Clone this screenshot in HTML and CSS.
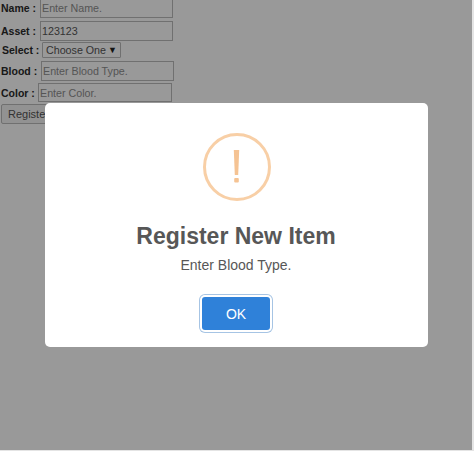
FILE: index.html
```html
<!DOCTYPE html>
<html lang="en">
<head>
    <meta charset="UTF-8">
    <meta name="viewport" content="width=device-width, initial-scale=1.0">
    <title>Register New Item</title>
    <link rel="stylesheet" href="styles.css">
</head>
<body>
    <form class="item-form">
        <div class="row row-name">
            <label class="label">Name :</label>
            <input class="field" type="text" placeholder="Enter Name.">
        </div>
        <div class="row row-asset">
            <label class="label">Asset :</label>
            <input class="field" type="text" value="123123">
        </div>
        <div class="row row-select">
            <label class="label">Select :</label>
            <div class="picker">Choose One <span class="picker-arrow">▼</span></div>
        </div>
        <div class="row row-blood">
            <label class="label">Blood :</label>
            <input class="field" type="text" placeholder="Enter Blood Type.">
        </div>
        <div class="row row-color">
            <label class="label">Color :</label>
            <input class="field" type="text" placeholder="Enter Color.">
        </div>
        <button class="register" type="button">Register</button>
    </form>

    <!-- Alert dialog over the form -->
    <div class="overlay">
        <div class="modal">
            <svg class="warning-icon" width="68" height="68" viewBox="0 0 68 68">
                <circle cx="34" cy="34" r="32.5" fill="none" stroke="#f8cfa6" stroke-width="3"/>
                <path d="M30.8 17h5.4l-1 25h-3.4z" fill="#f5c393"/>
                <rect x="31.2" y="45" width="4.6" height="4.5" rx="1" fill="#f5c393"/>
            </svg>
            <h2 class="title">Register New Item</h2>
            <p class="message">Enter Blood Type.</p>
            <button class="ok" type="button">OK</button>
        </div>
    </div>
</body>
</html>
```

FILE: styles.css
```css
html {
    background-color: #e4e4e4;
}
body {
    font-family: "Liberation Sans", Arial, sans-serif;
    margin: 0;
    background-color: #fff;
    width: 472px;
    height: 450px;
    overflow: hidden;
}
.item-form {
    padding-top: 1px;
    margin-top: -4px;
    font-size: 10.5px;
    color: #2b2b2b;
}
.row {
    display: flex;
    align-items: center;
}
.row-name {
    height: 21px;
    margin-bottom: 3px;
}
.row-asset {
    height: 20px;
    margin-bottom: 1px;
}
.row-select {
    height: 16px;
    margin-bottom: 3px;
}
.row-blood {
    height: 20px;
    margin-bottom: 2px;
}
.row-color {
    height: 19px;
    margin-bottom: 2px;
}
.label {
    font-weight: bold;
    white-space: nowrap;
    padding-left: 1px;
}
.row-name .label, .row-asset .label {
    width: 39px;
}
.row-select .label {
    width: 40px;
    padding-left: 2px;
}
.row-blood .label {
    width: 40px;
}
.row-color .label {
    width: 37px;
}
.field {
    box-sizing: border-box;
    width: 133px;
    height: 100%;
    padding: 0 1px;
    border: 1px solid #bbb;
    background: #fff;
    font: 10.7px "Liberation Sans", Arial, sans-serif;
    color: #555;
}
.row-color .field {
    width: 134px;
}
.field::placeholder {
    color: #8e8e8e;
}
.picker {
    box-sizing: border-box;
    display: flex;
    align-items: center;
    justify-content: space-between;
    width: 79px;
    height: 16px;
    padding: 0 3px;
    border: 1px solid #bbb;
    border-radius: 1px;
    background: #fff;
    font-size: 10.7px;
    color: #555;
    white-space: nowrap;
}
.picker-arrow {
    font-size: 9px;
    color: #222;
}
.register {
    box-sizing: border-box;
    display: block;
    width: 60px;
    height: 20px;
    margin-left: 1px;
    padding: 0 6px;
    border: 1px solid #bbb;
    border-radius: 2px;
    background: #f4f4f4;
    font: 11px "Liberation Sans", Arial, sans-serif;
    color: #555;
    text-align: left;
}
.overlay {
    position: fixed;
    top: 0;
    left: 0;
    width: 472px;
    height: 450px;
    display: flex;
    align-items: center;
    justify-content: center;
    background: rgba(0, 0, 0, 0.4);
}
.modal {
    box-sizing: border-box;
    width: 383px;
    height: 244px;
    display: flex;
    flex-direction: column;
    align-items: center;
    padding-top: 30px;
    background: #fff;
    border-radius: 5px;
}
.warning-icon {
    display: block;
    margin-left: 1px;
}
.title {
    margin: 20px 0 0;
    font-size: 23px;
    line-height: 30px;
    font-weight: bold;
    color: #575757;
}
.message {
    margin: 4px 0 0;
    font-size: 14px;
    line-height: 20px;
    color: #575757;
}
.ok {
    box-sizing: border-box;
    width: 68px;
    height: 33px;
    margin-top: 22px;
    border: none;
    border-radius: 3px;
    background: #2f81d9;
    box-shadow: 0 0 0 2px #fff, 0 0 0 3px #a6c4e4;
    font: 14px "Liberation Sans", Arial, sans-serif;
    color: #fff;
}
```
